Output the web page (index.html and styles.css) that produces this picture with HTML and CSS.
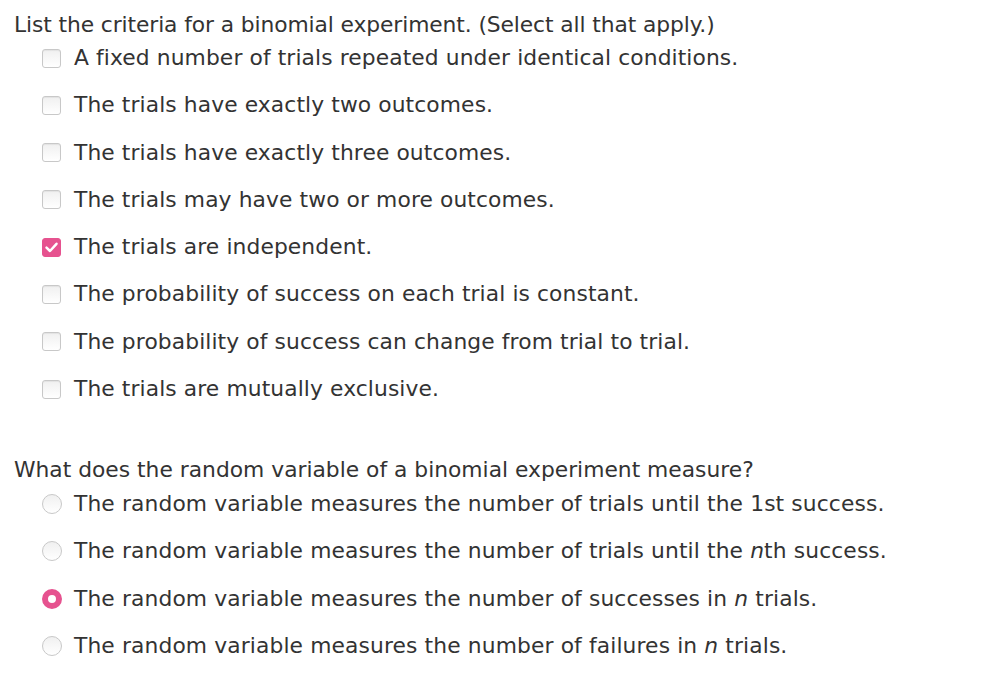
FILE: index.html
```html
<!DOCTYPE html>
<html>
<head>
<meta charset="utf-8">
<link rel="stylesheet" href="styles.css">
</head>
<body>
<div class="page">
  <div class="question q1">
    <div class="prompt">List the criteria for a binomial experiment. (Select all that apply.)</div>
    <div class="options">
      <div class="option"><span class="box"></span><span class="label">A fixed number of trials repeated under identical conditions.</span></div>
      <div class="option"><span class="box"></span><span class="label">The trials have exactly two outcomes.</span></div>
      <div class="option"><span class="box"></span><span class="label">The trials have exactly three outcomes.</span></div>
      <div class="option"><span class="box"></span><span class="label">The trials may have two or more outcomes.</span></div>
      <div class="option"><span class="box checked"><svg viewBox="0 0 19 19" width="19" height="19"><path d="M4.5 9.6 L8 13 L14.5 5.8" fill="none" stroke="#fff" stroke-width="2.5" stroke-linecap="round" stroke-linejoin="round"/></svg></span><span class="label">The trials are independent.</span></div>
      <div class="option"><span class="box"></span><span class="label">The probability of success on each trial is constant.</span></div>
      <div class="option"><span class="box"></span><span class="label">The probability of success can change from trial to trial.</span></div>
      <div class="option"><span class="box"></span><span class="label">The trials are mutually exclusive.</span></div>
    </div>
  </div>
  <div class="question q2">
    <div class="prompt">What does the random variable of a binomial experiment measure?</div>
    <div class="options">
      <div class="option"><span class="radio"></span><span class="label">The random variable measures the number of trials until the 1st success.</span></div>
      <div class="option"><span class="radio"></span><span class="label">The random variable measures the number of trials until the <i>n</i>th success.</span></div>
      <div class="option"><span class="radio selected"></span><span class="label">The random variable measures the number of successes in <i>n</i> trials.</span></div>
      <div class="option"><span class="radio"></span><span class="label">The random variable measures the number of failures in <i>n</i> trials.</span></div>
    </div>
  </div>
</div>
</body>
</html>
```

FILE: styles.css
```css
html, body {
  margin: 0;
  padding: 0;
  background: #fff;
}
.page {
  font-family: "DejaVu Sans", Verdana, sans-serif;
  font-size: 21.8px;
  color: #333;
  padding: 11px 0 0 14px;
}
.prompt {
  line-height: 28px;
  height: 28px;
  white-space: nowrap;
}
.q1 .prompt {
  letter-spacing: -0.1px;
}
.options {
  display: flex;
  flex-direction: column;
  gap: 19.3px;
  margin-top: 5px;
  padding-left: 28px;
}
.q1 .options .label {
  letter-spacing: 0.1px;
}
.q2 {
  margin-top: 53px;
}
.q2 .options {
  margin-top: 6px;
}
.q2 .options .label {
  letter-spacing: 0.12px;
}
.option {
  display: flex;
  align-items: center;
  height: 28px;
  line-height: 28px;
  white-space: nowrap;
}
.box {
  box-sizing: border-box;
  width: 19px;
  height: 19px;
  border: 1px solid #c8c8c8;
  border-radius: 3px;
  background: linear-gradient(#f0f0f0, #fff);
  box-shadow: inset 0 1px 1px rgba(0,0,0,0.06);
  margin-right: 13px;
  flex: none;
  display: flex;
}
.box.checked {
  background: #e6528f;
  border-color: #e6528f;
  box-shadow: none;
}
.box.checked svg {
  margin: -1px;
}
.radio {
  box-sizing: border-box;
  width: 20px;
  height: 20px;
  border: 1px solid #c8c8c8;
  border-radius: 50%;
  background: linear-gradient(#f0f0f0, #fff);
  margin-right: 12px;
  flex: none;
}
.radio.selected {
  border: 6px solid #e6528f;
  background: #fff;
}
.label i {
  font-style: italic;
}
```
